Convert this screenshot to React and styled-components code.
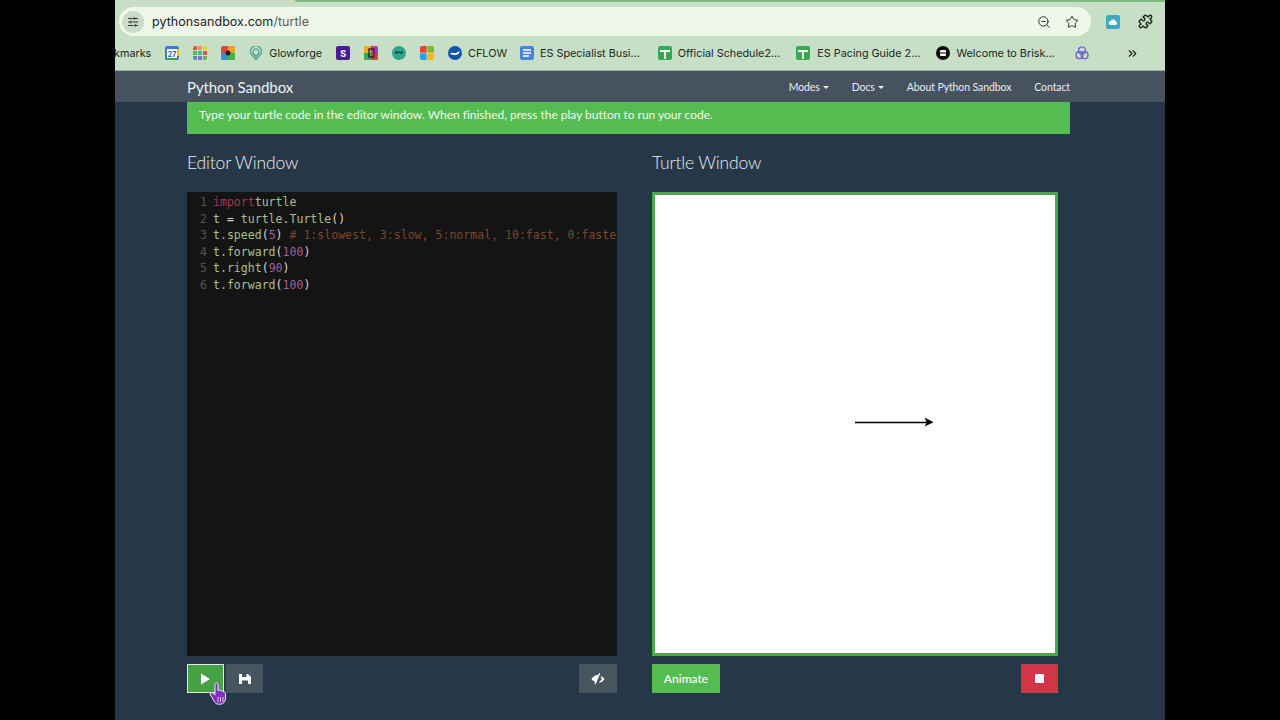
import React from "react";
import styled, { createGlobalStyle } from "styled-components";
import { ZoomOut, Star, Puzzle, ChevronsRight, Folder, SlidersHorizontal } from "lucide-react";

const Global = createGlobalStyle`
  html, body { margin: 0; padding: 0; background: #000; }
  body { width: 1280px; height: 720px; overflow: hidden; }
`;
const Frame = styled.div`
  position: relative; width: 1050px; height: 720px; margin: 0 auto; overflow: hidden;
  background: #263847; display: flex; flex-direction: column; font-family: Lato, sans-serif;
`;
const Chrome = styled.header`
  height: 71px; flex: none; background: #c6dfc6; border-bottom: 1px solid #9fb3a6; box-sizing: border-box;
  display: flex; flex-direction: column; font-family: Inter, "Liberation Sans", sans-serif; color: #20271f;
`;
const TabEdge = styled.div`height: 2px; margin-left: 180px; background: #7dbb7f; flex: none; border-radius: 0 0 0 3px;`;
const AddressRow = styled.div`height: 29px; margin-top: 5px; display: flex; align-items: center; flex: none;`;
const AddressBar = styled.div`
  width: 972px; margin-left: 4px; height: 29px; border-radius: 15px; background: #eff6ea;
  display: flex; align-items: center; box-sizing: border-box; padding: 0 12px 0 3px;
`;
const SiteChip = styled.div`
  width: 22px; height: 22px; border-radius: 50%; background: #c9dcc9; display: flex; align-items: center; justify-content: center; margin-right: 8px;
`;
const Url = styled.div`font-size: 12.5px; color: #1e241e; flex: 1; letter-spacing: .05px;`;
const UrlPath = styled.span`color: #596059;`;
const BarIcons = styled.div`display: flex; align-items: center; gap: 14px; color: #2b312b;`;
const ExtIcons = styled.div`display: flex; align-items: center; gap: 18px; margin-left: 15px; color: #1c221c;`;
const CloudIcon = styled.div`width: 14px; height: 14px; border-radius: 2px; background: #3fa7c4; display:flex; align-items:center; justify-content:center;`;
const Bookmarks = styled.div`
  height: 16px; margin-top: 9px; display: flex; align-items: center; gap: 14px; white-space: nowrap; font-size: 10.8px; margin-left: -21px;
`;
const Mark = styled.div`display: flex; align-items: center; gap: ${p => p.$gap ?? 6}px; margin-left: ${p => p.$ml ?? 0}px; flex: none;`;
const Fav = styled.div`
  width: 14px; height: 14px; flex: none; border-radius: ${p => p.$r ?? 2}px; background: ${p => p.$bg || "transparent"};
  display: flex; align-items: center; justify-content: center; overflow: hidden; color: #fff; font-size: 9px; font-weight: 700;
`;
const Sep = styled.div`width: 1px; height: 14px; background: #9db5a0; margin: 0 0 0 5px;`;
const Nav = styled.nav`
  height: 31px; flex: none; background: #46535f; padding: 0 95px 0 72px; display: flex; align-items: center; justify-content: space-between; color: #e9edef;
`;
const Brand = styled.div`font-size: 15px; color: #eef1f2; letter-spacing: -0.1px;`;
const NavLinks = styled.div`display: flex; gap: 23px; font-size: 10.5px; letter-spacing: -0.1px;`;
const NavLink = styled.div`display: flex; align-items: center; gap: 3px;`;
const Caret = styled.i`width: 0; height: 0; border-left: 3px solid transparent; border-right: 3px solid transparent; border-top: 3px solid #e9edef; margin-top: 1px;`;
const Main = styled.main`padding: 0 95px 0 72px; display: flex; flex-direction: column;`;
const Alert = styled.div`
  height: 32px; background: #55bc52; color: #f2f8ef; font-size: 12px; padding: 5px 12px 0; box-sizing: border-box; letter-spacing: -0.02px;
`;
const Columns = styled.div`display: grid; grid-template-columns: 430px 406px; column-gap: 35px; margin-top: 17px;`;
const Column = styled.section`display: flex; flex-direction: column; min-width: 0;`;
const Title = styled.h2`margin: 0 0 17px; font-size: 17.5px; line-height: 24px; height: 24px; font-weight: 300; color: #e8ecee; letter-spacing: -0.15px;`;
const Editor = styled.div`
  height: 464px; background: #141414; overflow: hidden; padding: 2px 0 0 0; box-sizing: border-box;
  font-family: "DejaVu Sans Mono", monospace; font-size: 11.55px; line-height: 16.6px;
`;
const Line = styled.div`display: flex; white-space: pre;`;
const Gutter = styled.span`width: 20px; text-align: right; color: #555; flex: none; margin-right: 6px;`;
const Code = styled.span`color: ${p => p.$c || "#a6c08a"};`;
const Canvas = styled.div`
  height: 464px; box-sizing: border-box; background: #fff; border: 3px solid #4da64b; display: flex;
`;
const Toolbar = styled.div`display: flex; align-items: center; justify-content: space-between; margin-top: 8px; height: 29px;`;
const Group = styled.div`display: flex; gap: 2px; position: relative;`;
const Btn = styled.button`
  width: ${p => p.$w || 37}px; height: 29px; border: 0; padding: 0; color: #fff; background: ${p => p.$bg || "#47555f"};
  display: flex; align-items: center; justify-content: center; font-family: Lato, sans-serif; font-size: 12px; font-weight: 500;
  box-sizing: border-box; ${p => p.$focus && "outline: 1px solid #e4ece2; outline-offset: -1px; border: 1px solid #2d6b2b;"}
`;
const Hand = styled.svg`position: absolute; left: 22px; top: 18px; width: 20px; height: 24px;`;

const Sliders = () => <SlidersHorizontal size={12} color="#2a302a" strokeWidth={2} />;

export default function App() {
  return (
    <>
      <Global />
      <Frame>
        <Chrome>
          <TabEdge />
          <AddressRow>
            <AddressBar>
              <SiteChip><Sliders /></SiteChip>
              <Url>pythonsandbox.com<UrlPath>/turtle</UrlPath></Url>
              <BarIcons><ZoomOut size={14} strokeWidth={1.7} /><Star size={14} strokeWidth={1.7} /></BarIcons>
            </AddressBar>
            <ExtIcons>
              <CloudIcon><svg width="10" height="8" viewBox="0 0 10 8"><path d="M2.5 7a2 2 0 0 1 0-4 3 3 0 0 1 5.4.5A1.8 1.8 0 0 1 7.6 7z" fill="#eafaff"/></svg></CloudIcon>
              <Puzzle size={15} strokeWidth={2.2} />
            </ExtIcons>
          </AddressRow>
          <Bookmarks>
            <Mark>Bookmarks</Mark>
            <Fav $bg="#3b78d8"><svg width="14" height="14" viewBox="0 0 14 14"><rect x="2" y="3" width="10" height="9" fill="#fff"/><path d="M0 12h10v2H0z" fill="#34a853"/><path d="M12 3h2v7h-2z" fill="#fbbc04"/><text x="7" y="10.5" fontSize="7" textAnchor="middle" fill="#2a5fb0" fontFamily="Inter">27</text></svg></Fav>
            <Fav><svg width="14" height="14" viewBox="0 0 14 14">{["#d9534f","#e8a33d","#e8d03d","#5cb85c","#3cb5a8","#d9534f","#4a90c2","#8e6bbf","#5cb85c"].map((c,i)=><rect key={i} x={i%3*5} y={Math.floor(i/3)*5} width="4" height="4" fill={c}/>)}</svg></Fav>
            <Fav $bg="#e0443e"><svg width="14" height="14" viewBox="0 0 14 14"><path d="M7 0h7v7H7z" fill="#f0a030"/><path d="M7 7h7v7H7z" fill="#3db54a"/><path d="M0 7h7v7H0z" fill="#3a8fd8"/><circle cx="7" cy="7" r="2.5" fill="#222"/></svg></Fav>
            <Mark>
              <Fav><svg width="14" height="14" viewBox="0 0 14 14" fill="none" stroke="#3f9c93" strokeWidth="1.2"><path d="M7 13.5 2.5 8.5a5.5 5.5 0 1 1 9 0z"/><path d="M7 10.5 4.7 8a3 3 0 1 1 4.6 0z"/></svg></Fav>
              Glowforge
            </Mark>
            <Fav $bg="#4b1d91">S</Fav>
            <Fav $bg="#b5369c"><svg width="14" height="14" viewBox="0 0 14 14"><path d="M0 0h7v7H0z" fill="#e8b020"/><path d="M0 7h7v7H0z" fill="#37a85a"/><path d="M7 7h7v7H7z" fill="#d8403a"/><path d="M5 3h5v8H5z" fill="none" stroke="#33204f" strokeWidth="1.4"/></svg></Fav>
            <Fav $bg="#2fa58c" $r={7}><svg width="14" height="14" viewBox="0 0 14 14"><path d="M3 5.5h8v2H8.2L7 6.6 5.8 7.5H3z" fill="#10463c"/></svg></Fav>
            <Fav><svg width="14" height="14" viewBox="0 0 14 14"><rect width="6.6" height="6.6" fill="#e8432e"/><rect x="7.4" width="6.6" height="6.6" fill="#7fba2c"/><rect y="7.4" width="6.6" height="6.6" fill="#1ca5e8"/><rect x="7.4" y="7.4" width="6.6" height="6.6" fill="#fbb813"/></svg></Fav>
            <Mark>
              <Fav $bg="#0f56a8" $r={7}><svg width="14" height="14" viewBox="0 0 14 14"><path d="M2 8c2-3 4 0 6-1l4-2c-1 3-3 4-5 4S3 8 2 8z" fill="#fff"/></svg></Fav>
              CFLOW
            </Mark>
            <Mark $gap={6} $ml={-1}>
              <Fav $bg="#4c82e0"><svg width="14" height="14" viewBox="0 0 14 14" stroke="#fff" strokeWidth="1.4"><path d="M3 4h8M3 7h8M3 10h6"/></svg></Fav>
              ES Specialist Busi...
            </Mark>
            <Mark $ml={4}>
              <Fav $bg="#34a853"><svg width="14" height="14" viewBox="0 0 14 14" stroke="#fff" strokeWidth="1.8"><path d="M2 5h10M7 5v8"/></svg></Fav>
              Official Schedule2...
            </Mark>
            <Mark $ml={2} $gap={7}>
              <Fav $bg="#34a853"><svg width="14" height="14" viewBox="0 0 14 14" stroke="#fff" strokeWidth="1.8"><path d="M2 5h10M7 5v8"/></svg></Fav>
              ES Pacing Guide 2...
            </Mark>
            <Mark $ml={2}>
              <Fav $bg="#0c0c0c" $r={7}><svg width="14" height="14" viewBox="0 0 14 14"><rect x="4" y="4" width="6" height="6" rx="1" fill="#fff"/><path d="M4 7h6" stroke="#000" strokeWidth="1.2"/></svg></Fav>
              Welcome to Brisk...
            </Mark>
            <Mark $ml={6}>
              <Fav><svg width="14" height="14" viewBox="0 0 14 14" fill="none" stroke="#6a58c8" strokeWidth="1.2"><circle cx="7" cy="4.5" r="3.5"/><circle cx="4.5" cy="9.2" r="3.5"/><circle cx="9.5" cy="9.2" r="3.5"/></svg></Fav>
            </Mark>
            <Mark $ml={23}><ChevronsRight size={13} strokeWidth={2.2} /></Mark>
            <Sep />
            <Mark $ml={1}><Folder size={15} strokeWidth={1.4} /></Mark>
            <Mark $ml={-7}>All Bookmarks</Mark>
          </Bookmarks>
        </Chrome>
        <Nav>
          <Brand>Python Sandbox</Brand>
          <NavLinks>
            <NavLink>Modes <Caret /></NavLink>
            <NavLink>Docs <Caret /></NavLink>
            <NavLink>About Python Sandbox</NavLink>
            <NavLink>Contact</NavLink>
          </NavLinks>
        </Nav>
        <Main>
          <Alert>Type your turtle code in the editor window. When finished, press the play button to run your code.</Alert>
          <Columns>
            <Column>
              <Title>Editor Window</Title>
              <Editor>
                <Line><Gutter>1</Gutter><Code $c="#a8364a">import</Code> <Code>turtle</Code></Line>
                <Line><Gutter>2</Gutter><Code>t</Code><Code $c="#d5d5d5"> = </Code><Code>turtle.Turtle</Code><Code $c="#d5d5d5">()</Code></Line>
                <Line><Gutter>3</Gutter><Code>t.speed</Code><Code $c="#d5d5d5">(</Code><Code $c="#a0609c">5</Code><Code $c="#d5d5d5">) </Code><Code $c="#7a4630"># 1:slowest, 3:slow, 5:normal, 10:fast, 0:fastest</Code></Line>
                <Line><Gutter>4</Gutter><Code>t.forward</Code><Code $c="#d5d5d5">(</Code><Code $c="#a0609c">100</Code><Code $c="#d5d5d5">)</Code></Line>
                <Line><Gutter>5</Gutter><Code>t.right</Code><Code $c="#d5d5d5">(</Code><Code $c="#a0609c">90</Code><Code $c="#d5d5d5">)</Code></Line>
                <Line><Gutter>6</Gutter><Code>t.forward</Code><Code $c="#d5d5d5">(</Code><Code $c="#a0609c">100</Code><Code $c="#d5d5d5">)</Code></Line>
              </Editor>
              <Toolbar>
                <Group>
                  <Btn $bg="#47a044" $focus aria-label="Run">
                    <svg width="11" height="12" viewBox="0 0 11 12"><path d="M1 0.5 10 6l-9 5.5z" fill="#fff"/></svg>
                  </Btn>
                  <Btn aria-label="Save">
                    <svg width="12" height="12" viewBox="0 0 12 12"><path d="M0 1h9l3 3v7H0z" fill="#fff"/><path d="M3 1h4.5v3H3zM3 7.5h6V11H3z" fill="#47555f"/></svg>
                  </Btn>
                  <Hand viewBox="0 0 20 24">
                    <path d="M6 2.5c0-2 3-2 3 0v6l1-.3c1-.3 1.8.2 2 .8 1-.4 2 0 2.300.8 1-.3 2.200.2 2.200 1.400v5c0 3-2 6-5 6H9.500c-2 0-3-1-4-2.500L1.500 13c-1-1.800 1-3 2.300-2L6 13z" fill="#7d2fc0" stroke="#f4e6ff" strokeWidth="1"/>
                    <path d="M9 15v5M11.500 15v5M14 15v5" stroke="#e6c8ff" strokeWidth="1"/>
                  </Hand>
                </Group>
                <Btn $w={38} aria-label="Hide">
                  <svg width="14" height="12" viewBox="0 0 14 12"><path d="M.5 6C2 3.500 4.300 2 7 2l1-2 1.200.6L4.500 11.500 3.300 11l.9-2C2.700 8.400 1.400 7.400.5 6z" fill="#fff"/><path d="M9.500 3C11 3.700 12.500 4.700 13.500 6c-1.200 1.800-3 3.400-5.500 3.900l.9-1.700c1-.5 1.700-1.300 1.700-2.300 0-.6-.2-1-.5-1.400z" fill="#fff"/></svg>
                </Btn>
              </Toolbar>
            </Column>
            <Column>
              <Title>Turtle Window</Title>
              <Canvas>
                <svg width="100%" height="100%" viewBox="0 0 400 458">
                  <path d="M200 227.500H272" stroke="#000" strokeWidth="1.600"/>
                  <path d="M278 227.300 270 223l2 4.500-2 3.500z" fill="#000" stroke="#000" strokeWidth="0.500"/>
                </svg>
              </Canvas>
              <Toolbar>
                <Btn $w={68} $bg="#55bc52">Animate</Btn>
                <Btn $bg="#cf3648" aria-label="Stop">
                  <svg width="9" height="9" viewBox="0 0 9 9"><rect width="9" height="9" rx="1" fill="#fff"/></svg>
                </Btn>
              </Toolbar>
            </Column>
          </Columns>
        </Main>
      </Frame>
    </>
  );
}
